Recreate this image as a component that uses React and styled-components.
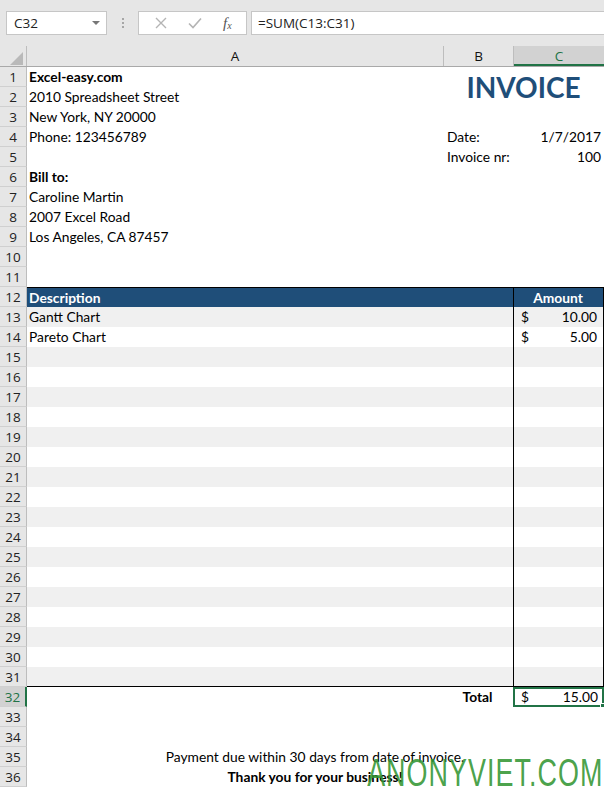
import React from "react";
import styled, { createGlobalStyle } from "styled-components";

const GlobalStyle = createGlobalStyle`
  html, body { margin: 0; padding: 0; background: #ffffff; }
  * { box-sizing: border-box; }
`;

const GREEN = "#217346";
const NAVY = "#1f4e79";
const COLS = "27px 416px 70px 91px";

const Window = styled.div`
  position: relative;
  width: 604px;
  height: 787px;
  overflow: hidden;
  background: #ffffff;
  font-family: Lato, "Open Sans", sans-serif;
`;

const Toolbar = styled.div`
  height: 46px;
  background: #e6e6e6;
  display: flex;
  align-items: flex-start;
  padding: 11px 0 0 6px;
  font-family: "Open Sans", "Noto Sans", sans-serif;
  font-size: 13.5px;
  color: #222;
`;

const Box = styled.div`
  height: 24px;
  background: #fff;
  border: 1px solid #c6c6c6;
  display: flex;
  align-items: center;
`;

const NameBox = styled(Box)`
  width: 101px;
  padding: 0 6px 0 7px;
  justify-content: space-between;
`;

const Caret = styled.span`
  width: 0;
  height: 0;
  border-left: 4px solid transparent;
  border-right: 4px solid transparent;
  border-top: 4px solid #777;
`;

const Grip = styled.div`
  width: 31px;
  height: 24px;
  display: flex;
  flex-direction: column;
  align-items: center;
  justify-content: center;
  gap: 2px;
  & > span { width: 2px; height: 2px; background: #a6a6a6; }
`;

const FxBox = styled(Box)`
  width: 109px;
  justify-content: space-around;
  padding: 0 4px 0 6px;
`;

const Fx = styled.span`
  font-family: "Liberation Serif", serif;
  font-style: italic;
  font-size: 15px;
  color: #555;
  & sub { font-size: 10px; vertical-align: -1px; }
`;

const FormulaBar = styled(Box)`
  flex: 1;
  margin-left: 4px;
  border-right: none;
  padding-left: 6px;
`;

const ColHeader = styled.div`
  display: grid;
  grid-template-columns: ${COLS};
  height: 21px;
  background: #e6e6e6;
  border-bottom: 1px solid #a9a9a9;
  font-family: "Open Sans", "Noto Sans", sans-serif;
  font-size: 13.5px;
`;

const ColCell = styled.div`
  display: flex;
  align-items: center;
  justify-content: center;
  border-left: ${(p) => (p.$first ? "none" : "1px solid #bdbdbd")};
  background: ${(p) => (p.$sel ? "#d2d2d2" : "transparent")};
  color: ${(p) => (p.$sel ? GREEN : "#111")};
  box-shadow: ${(p) => (p.$sel ? `inset 0 -2px 0 ${GREEN}` : "none")};
  position: relative;
`;

const Corner = styled.div`
  border-right: 1px solid #bdbdbd;
  display: flex;
  align-items: flex-end;
  justify-content: flex-end;
  padding: 0 3px 1px 0;
`;

const Sheet = styled.div`
  display: grid;
  grid-template-columns: ${COLS};
  grid-template-rows: repeat(36, 20px);
  font-size: 14px;
  color: #000;
`;

const RowHead = styled.div`
  display: flex;
  align-items: center;
  justify-content: center;
  background: ${(p) => (p.$sel ? "#d2d2d2" : "#e6e6e6")};
  color: ${(p) => (p.$sel ? GREEN : "#222")};
  border-bottom: 1px solid #d0d0d0;
  border-right: ${(p) => (p.$sel ? `2px solid ${GREEN}` : "1px solid #bdbdbd")};
  font-family: "Open Sans", "Noto Sans", sans-serif;
  font-size: 13.5px;
`;

const border = (on) => (on ? "1px solid #000" : "none");

const Cell = styled.div`
  grid-column: span ${(p) => p.$span || 1};
  grid-row: span ${(p) => p.$rows || 1};
  display: flex;
  align-items: center;
  justify-content: ${(p) =>
    p.$align === "right" ? "flex-end" : p.$align === "center" ? "center" : "flex-start"};
  padding: 0 ${(p) => p.$pr ?? 3}px 0 ${(p) => p.$pl ?? 2}px;
  background: ${(p) => p.$bg || "transparent"};
  color: ${(p) => p.$color || "#000"};
  font-weight: ${(p) => (p.$bold ? 700 : 400)};
  font-size: ${(p) => p.$size || 13.8}px;
  border-top: ${(p) => border(p.$bt)};
  border-bottom: ${(p) => border(p.$bb)};
  border-left: ${(p) => border(p.$bl)};
  border-right: ${(p) => border(p.$br)};
  white-space: nowrap;
  line-height: 20px;
`;

const AmountCell = styled(Cell)`
  justify-content: space-between;
  padding: 0 6px 0 7px;
`;

const SelectedCell = styled(AmountCell)`
  position: relative;
  border: 2px solid ${GREEN};
  padding: 0 4px 0 6px;
`;

const Handle = styled.span`
  position: absolute;
  right: -3px;
  bottom: -3px;
  width: 5px;
  height: 5px;
  background: ${GREEN};
  border: 1px solid #fff;
`;

const Title = styled(Cell)`
  font-size: 28px;
  font-weight: 700;
  color: ${NAVY};
  justify-content: center;
  padding: 0;
`;

const Watermark = styled.div`
  position: absolute;
  right: 1px;
  bottom: -8px;
  font-family: "Liberation Sans", sans-serif;
  font-size: 39px;
  color: rgba(52, 150, 52, 0.9);
  transform: scaleX(0.69);
  transform-origin: right bottom;
  letter-spacing: 1.5px;
  white-space: nowrap;
`;

const STRIPE = "#f0f0f0";

function rowCells(r) {
  switch (r) {
    case 1:
      return [
        <Cell key="a" $bold>Excel-easy.com</Cell>,
        <Title key="t" $span={2} $rows={2}>INVOICE</Title>,
      ];
    case 2:
      return [<Cell key="a">2010 Spreadsheet Street</Cell>];
    case 3:
      return [<Cell key="a">New York, NY 20000</Cell>, <Cell key="b" />, <Cell key="c" />];
    case 4:
      return [
        <Cell key="a">Phone: 123456789</Cell>,
        <Cell key="b" $pl={4}>Date:</Cell>,
        <Cell key="c" $align="right" $pr={3}>1/7/2017</Cell>,
      ];
    case 5:
      return [
        <Cell key="a" />,
        <Cell key="b" $pl={4}>Invoice nr:</Cell>,
        <Cell key="c" $align="right" $pr={3}>100</Cell>,
      ];
    case 6:
      return [<Cell key="a" $bold>Bill to:</Cell>, <Cell key="b" />, <Cell key="c" />];
    case 7:
      return [<Cell key="a">Caroline Martin</Cell>, <Cell key="b" />, <Cell key="c" />];
    case 8:
      return [<Cell key="a">2007 Excel Road</Cell>, <Cell key="b" />, <Cell key="c" />];
    case 9:
      return [<Cell key="a">Los Angeles, CA 87457</Cell>, <Cell key="b" />, <Cell key="c" />];
    case 12:
      return [
        <Cell key="a" $bg={NAVY} $color="#fff" $bold $bt>Description</Cell>,
        <Cell key="b" $bg={NAVY} $bt />,
        <Cell key="c" $bg={NAVY} $color="#fff" $bold $bt $bl $br $align="center">Amount</Cell>,
      ];
    case 32:
      return [
        <Cell key="a" />,
        <Cell key="b" $bold $align="center">Total</Cell>,
        <SelectedCell key="c">
          <span>$</span>
          <span>15.00</span>
          <Handle />
        </SelectedCell>,
      ];
    case 35:
      return [
        <Cell key="a" $span={3} $align="center">
          Payment due within 30 days from date of invoice.
        </Cell>,
      ];
    case 36:
      return [
        <Cell key="a" $span={3} $align="center" $bold>
          Thank you for your business!
        </Cell>,
      ];
    default:
      break;
  }
  if (r >= 13 && r <= 31) {
    const bg = r % 2 === 1 ? STRIPE : "#fff";
    const last = r === 31;
    const items = { 13: ["Gantt Chart", "10.00"], 14: ["Pareto Chart", "5.00"] }[r];
    return [
      <Cell key="a" $bg={bg} $bb={last}>{items ? items[0] : ""}</Cell>,
      <Cell key="b" $bg={bg} $bb={last} />,
      items ? (
        <AmountCell key="c" $bg={bg} $bl $br $bb={last}>
          <span>$</span>
          <span>{items[1]}</span>
        </AmountCell>
      ) : (
        <Cell key="c" $bg={bg} $bl $br $bb={last} />
      ),
    ];
  }
  return [<Cell key="a" />, <Cell key="b" />, <Cell key="c" />];
}

const rows = Array.from({ length: 36 }, (_, i) => i + 1);

export default function App() {
  return (
    <Window>
      <GlobalStyle />
      <Toolbar>
        <NameBox>
          <span>C32</span>
          <Caret />
        </NameBox>
        <Grip>
          <span />
          <span />
          <span />
        </Grip>
        <FxBox>
          <svg width="12" height="12" viewBox="0 0 12 12">
            <path d="M1 1 L11 11 M11 1 L1 11" stroke="#b4b4b4" strokeWidth="1.4" fill="none" />
          </svg>
          <svg width="14" height="12" viewBox="0 0 14 12">
            <path d="M1 6.5 L5 10.5 L13 1.5" stroke="#b4b4b4" strokeWidth="1.6" fill="none" />
          </svg>
          <Fx>
            f<sub>x</sub>
          </Fx>
        </FxBox>
        <FormulaBar>=SUM(C13:C31)</FormulaBar>
      </Toolbar>
      <ColHeader>
        <Corner>
          <svg width="13" height="13" viewBox="0 0 13 13">
            <path d="M13 0 L13 13 L0 13 Z" fill="#b9b9b9" />
          </svg>
        </Corner>
        <ColCell $first>A</ColCell>
        <ColCell>B</ColCell>
        <ColCell $sel>C</ColCell>
      </ColHeader>
      <Sheet>
        {rows.map((r) => (
          <React.Fragment key={r}>
            <RowHead $sel={r === 32}>{r}</RowHead>
            {rowCells(r)}
          </React.Fragment>
        ))}
      </Sheet>
      <Watermark>ANONYVIET.COM</Watermark>
    </Window>
  );
}
